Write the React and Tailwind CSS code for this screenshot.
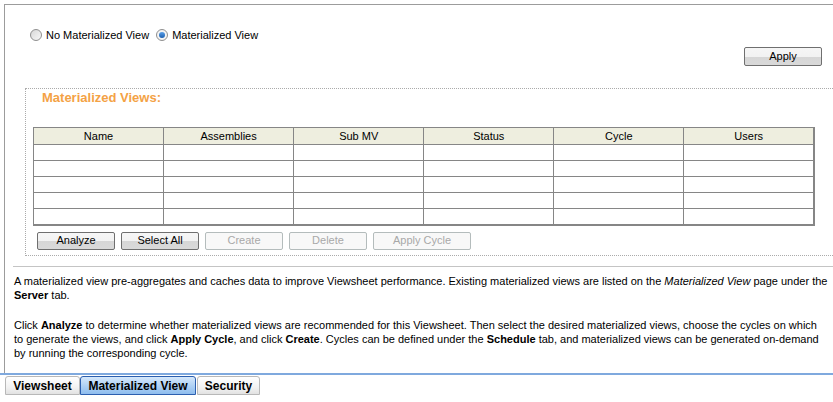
const COLUMNS = ['Name', 'Assemblies', 'Sub MV', 'Status', 'Cycle', 'Users'];
const ROWS = [0, 1, 2, 3, 4];

function Radio({ checked, label }) {
  return (
    <label className="flex items-center gap-[4px]">
      <span
        className={
          'w-[12px] h-[12px] rounded-full border border-[#8f8f8f] flex items-center justify-center ' +
          (checked ? 'bg-[#f4f4f4]' : 'bg-gradient-to-br from-[#d8d8d8] to-[#f8f8f8]')
        }
      >
        {checked && <span className="w-[6px] h-[6px] rounded-full bg-gradient-to-b from-[#5aa0e8] to-[#1b5fb0]" />}
      </span>
      <span>{label}</span>
    </label>
  );
}

function Btn({ children, disabled, w = 'w-[78px] h-[18px]' }) {
  return (
    <button
      type="button"
      disabled={disabled}
      className={
        w +
        ' rounded-[2px] border text-[11px] leading-none flex items-center justify-center ' +
        (disabled
          ? 'border-[#b4bcbc] bg-[#f8f8f8] text-[#a8a8a8]'
          : 'border-[#6f6f6f] text-black bg-[linear-gradient(#f6f6f6_0%,#f2f2f2_50%,#d6d6d6_51%,#d9d9d9_100%)]')
      }
    >
      {children}
    </button>
  );
}

function Tab({ children, active, w }) {
  return (
    <div
      className={
        w +
        ' h-[19px] rounded-t-[3px] border flex items-center justify-center text-[12px] font-bold ' +
        (active
          ? 'border-[#2c5faf] bg-[linear-gradient(#d6e8fb,#a9cdf3_60%,#8fbdee)] text-black'
          : 'border-[#b8b8b8] bg-[linear-gradient(#ffffff,#f2f2f2_60%,#e2e2e2)] text-black')
      }
    >
      {children}
    </div>
  );
}

export default function App() {
  return (
    <div className="w-[833px] h-[402px] bg-white text-[11px] text-black font-['Liberation_Sans',Arial,sans-serif] overflow-hidden">
      <div className="pt-[4px] pl-[4px]">
        <div className="h-[369px] border-l border-t border-[#9c9c9c] flex flex-col">
          {/* radio row */}
          <div className="flex items-center gap-[7px] pl-[25px] mt-[23px] h-[14px]">
            <Radio label="No Materialized View" />
            <Radio checked label="Materialized View" />
          </div>

          <div className="flex justify-end pr-[11px] mt-[5px]">
            <Btn w="w-[78px] h-[19px]">Apply</Btn>
          </div>

          {/* materialized views box */}
          <div className="ml-[20px] mt-[22px] h-[168px] border-l border-t border-b border-dotted border-[#ababab] flex flex-col">
            <div className="pl-[16px] pt-[1px] text-[13px] font-bold text-[#f4a245] leading-[16px]">Materialized Views:</div>
            <table className="ml-[7px] mt-[21px] w-[782px] border-collapse table-fixed border-t border-l border-[#868686] border-r-2 border-b-2">
              <thead>
                <tr className="h-[17px] bg-[#eeeedf]">
                  {COLUMNS.map((c) => (
                    <th key={c} className="border border-[#868686] font-normal text-[11px] p-0 leading-[14px]">
                      {c}
                    </th>
                  ))}
                </tr>
              </thead>
              <tbody>
                {ROWS.map((r) => (
                  <tr key={r} className="h-[16px]">
                    {COLUMNS.map((c) => (
                      <td key={c} className="border border-[#868686] p-0" />
                    ))}
                  </tr>
                ))}
              </tbody>
            </table>
            <div className="flex gap-[6px] ml-[11px] mt-[6px]">
              <Btn>Analyze</Btn>
              <Btn>Select All</Btn>
              <Btn disabled>Create</Btn>
              <Btn disabled>Delete</Btn>
              <Btn disabled w="w-[98px] h-[18px]">Apply Cycle</Btn>
            </div>
          </div>

          <div className="ml-[8px] mt-[10px] border-t border-[#c4c4c4]" />

          <div className="pl-[9px] pt-[7px] leading-[14px] whitespace-nowrap">
            <div>
              A materialized view pre-aggregates and caches data to improve Viewsheet performance. Existing materialized views are listed on the <i>Materialized View</i> page under the
            </div>
            <div>
              <b>Server</b> tab.
            </div>
            <div className="mt-[16px]">
              Click <b>Analyze</b> to determine whether materialized views are recommended for this Viewsheet. Then select the desired materialized views, choose the cycles on which
            </div>
            <div>
              to generate the views, and click <b>Apply Cycle</b>, and click <b>Create</b>. Cycles can be defined under the <b>Schedule</b> tab, and materialized views can be generated on-demand
            </div>
            <div>by running the corresponding cycle.</div>
          </div>
        </div>
        <div className="h-[2px] bg-[#7fa9de] -ml-[4px]" />
        <div className="flex mt-[1px] pl-[1px]">
          <Tab w="w-[75px]">Viewsheet</Tab>
          <Tab active w="w-[116px]">Materialized View</Tab>
          <Tab w="w-[63px] ml-[1px]">Security</Tab>
        </div>
      </div>
    </div>
  );
}
